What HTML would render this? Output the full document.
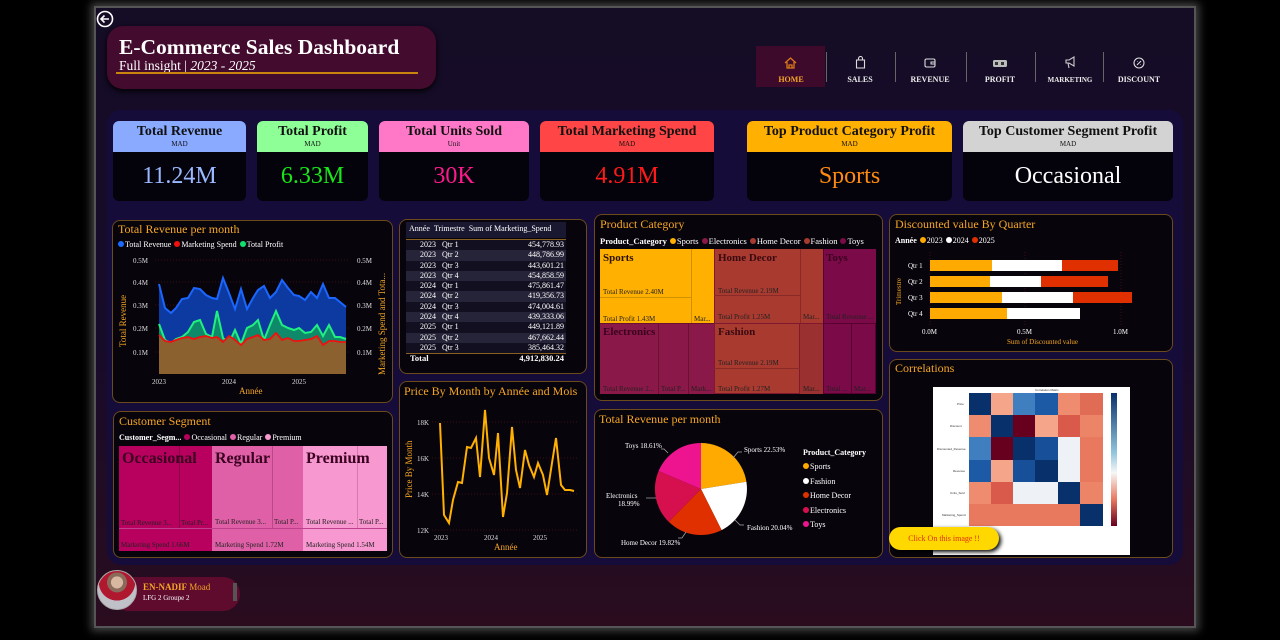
<!DOCTYPE html>
<html><head><meta charset="utf-8"><style>
*{margin:0;padding:0;box-sizing:border-box}
body{width:1280px;height:640px;background:#000;position:relative;overflow:hidden;font-family:"Liberation Serif",serif;color:#fff}
.a{position:absolute}
#frame{left:94px;top:6px;width:1102px;height:622px;background:linear-gradient(180deg,#150c26 0%,#170b2a 55%,#2a0c1e 100%);border:2px solid #555;box-shadow:0 0 8px 3px #444}
.box{position:absolute;background:#07040b;border:1px solid #6b4a1c;border-radius:8px}
.tt{position:absolute;color:#f5a623;font-size:12px;white-space:nowrap}
.card{position:absolute;top:121px;height:80px;border-radius:6px;background:#04030c;overflow:hidden;text-align:center}
.card .h{height:31px;color:#111;font-weight:bold;font-size:14px;line-height:17px;padding-top:2px}
.card .h small{display:block;font-size:7px;font-weight:normal;line-height:9px}
.card .v{font-size:24px;line-height:48px}
.nav{position:absolute;top:46px;width:70px;height:41px;text-align:center;font-size:8px;font-weight:bold;color:#eee}
.nav span{position:absolute;left:0;right:0;top:29px}
.sep{position:absolute;top:52px;width:1px;height:30px;background:#666}
.lg{font-size:8px;position:absolute;white-space:nowrap;color:#fff}
.dot{display:inline-block;width:6px;height:6px;border-radius:50%;margin:0 1px 0 3px}
.tm{position:absolute;font-size:7px;color:#222;white-space:nowrap;overflow:hidden}
</style></head><body>
<div id="frame" class="a"></div>
<svg class="a" style="left:96px;top:10px" width="18" height="18" viewBox="0 0 18 18"><circle cx="9" cy="9" r="7.5" fill="none" stroke="#fff" stroke-width="1.6"/><path d="M13 9H5M8.5 5.5L5 9l3.5 3.5" fill="none" stroke="#fff" stroke-width="1.6"/></svg>
<div class="a" style="left:107px;top:26px;width:329px;height:63px;background:#430b2d;border-radius:16px;box-shadow:0 2px 6px #000"></div>
<div class="a" style="left:119px;top:35px;font-size:21.5px;font-weight:bold;white-space:nowrap">E-Commerce Sales Dashboard</div>
<div class="a" style="left:119px;top:58px;font-size:13.5px;white-space:nowrap">Full insight | <i>2023 - 2025</i></div>
<div class="a" style="left:116px;top:72px;width:302px;height:2px;background:#c8860f"></div>
<div class="a" style="left:756px;top:46px;width:69px;height:41px;background:#3e0a2c"></div>
<div class="nav" style="left:756px;color:#f5a623"><svg class="a" style="left:28px;top:11px" width="13" height="12" viewBox="0 0 13 12"><path d="M1 6L6.5 1 12 6M3 5v6h7V5M5 11V8h3v3" fill="none" stroke="#d97a18" stroke-width="1.3"/></svg><span>HOME</span></div>
<div class="sep" style="left:826px"></div>
<div class="nav" style="left:825px"><svg class="a" style="left:30px;top:10px" width="11" height="13" viewBox="0 0 11 13"><path d="M1.5 4h8v8h-8zM3.5 4V2.5a2 2 0 0 1 4 0V4" fill="none" stroke="#ddd" stroke-width="1.1"/></svg><span>SALES</span></div>
<div class="sep" style="left:895px"></div>
<div class="nav" style="left:895px"><svg class="a" style="left:29px;top:12px" width="12" height="10" viewBox="0 0 12 10"><rect x="1" y="1" width="10" height="8" rx="1.5" fill="none" stroke="#ddd" stroke-width="1.1"/><path d="M7 4h4v2H7z" fill="none" stroke="#ddd"/></svg><span>REVENUE</span></div>
<div class="sep" style="left:966px"></div>
<div class="nav" style="left:965px"><svg class="a" style="left:27px;top:12px" width="16" height="10" viewBox="0 0 16 10"><rect x="1" y="2" width="14" height="7" rx="1.5" fill="#bbb"/><rect x="3" y="4" width="3" height="3" fill="#333"/><rect x="9" y="4" width="3" height="3" fill="#333"/></svg><span>PROFIT</span></div>
<div class="sep" style="left:1035px"></div>
<div class="nav" style="left:1035px;font-size:7px"><svg class="a" style="left:29px;top:10px" width="12" height="13" viewBox="0 0 12 13"><path d="M2 4h3l5-3v9L5 7H2zM4 7l1 5" fill="none" stroke="#ccc" stroke-width="1.1"/></svg><span style="top:30px">MARKETING</span></div>
<div class="sep" style="left:1103px"></div>
<div class="nav" style="left:1104px"><svg class="a" style="left:29px;top:11px" width="12" height="12" viewBox="0 0 12 12"><circle cx="6" cy="6" r="5" fill="none" stroke="#ddd" stroke-width="1.1"/><path d="M4 8l4-4M4 4.5h.5M7.5 7.5h.5" stroke="#ddd" stroke-width="1.1"/></svg><span>DISCOUNT</span></div>
<div class="a" style="left:107px;top:110px;width:1076px;height:455px;background:#150c3a;border-radius:14px"></div>
<div class="card" style="left:113px;width:133px"><div class="h" style="background:#8aaaff">Total Revenue<small>MAD</small></div><div class="v" style="color:#9ab8ff">11.24M</div></div>
<div class="card" style="left:257px;width:111px"><div class="h" style="background:#8dff96">Total Profit<small>MAD</small></div><div class="v" style="color:#19e619">6.33M</div></div>
<div class="card" style="left:379px;width:150px"><div class="h" style="background:#ff78c8">Total Units Sold<small>Unit</small></div><div class="v" style="color:#ff1a8c">30K</div></div>
<div class="card" style="left:540px;width:174px"><div class="h" style="background:#ff4545">Total Marketing Spend<small>MAD</small></div><div class="v" style="color:#ff1a1a">4.91M</div></div>
<div class="card" style="left:747px;width:205px"><div class="h" style="background:#ffb000">Top Product Category Profit<small>MAD</small></div><div class="v" style="color:#ff8a10">Sports</div></div>
<div class="card" style="left:963px;width:210px"><div class="h" style="background:#d3d3d3">Top Customer Segment Profit<small>MAD</small></div><div class="v" style="color:#fff">Occasional</div></div>

<div class="box" style="left:112px;top:220px;width:281px;height:183px"></div>
<div class="box" style="left:399px;top:219px;width:188px;height:155px"></div>
<div class="box" style="left:399px;top:381px;width:188px;height:177px"></div>
<div class="box" style="left:113px;top:411px;width:280px;height:147px"></div>
<div class="box" style="left:594px;top:214px;width:289px;height:187px"></div>
<div class="box" style="left:594px;top:409px;width:289px;height:149px"></div>
<div class="box" style="left:889px;top:214px;width:284px;height:138px"></div>
<div class="box" style="left:889px;top:359px;width:284px;height:199px"></div>

<div class="tt" style="left:118px;top:222px">Total Revenue per month</div>
<div class="lg" style="left:115px;top:240px"><span class="dot" style="background:#1a6aff"></span>Total Revenue<span class="dot" style="background:#f01010"></span>Marketing Spend<span class="dot" style="background:#10e070"></span>Total Profit</div>

<svg class="a" style="left:0;top:0" width="1280" height="640">
<g font-family="Liberation Serif,serif" font-size="7" fill="#ddd">
<text x="133" y="263">0.5M</text><text x="133" y="285">0.4M</text><text x="133" y="308">0.3M</text><text x="133" y="331">0.2M</text><text x="133" y="355">0.1M</text>
<text x="357" y="263">0.5M</text><text x="357" y="285">0.4M</text><text x="357" y="308">0.3M</text><text x="357" y="331">0.2M</text><text x="357" y="355">0.1M</text>
<text x="152" y="384">2023</text><text x="222" y="384">2024</text><text x="292" y="384">2025</text>
</g>
<g stroke="#3a1010" stroke-dasharray="1 2"><line x1="155" y1="260" x2="350" y2="260"/><line x1="155" y1="282" x2="350" y2="282"/><line x1="155" y1="305" x2="350" y2="305"/><line x1="155" y1="328" x2="350" y2="328"/><line x1="155" y1="352" x2="350" y2="352"/></g>
<polygon fill="#0d3aa0" points="159,374 159,284 165,308 171,313 176,308 182,299 188,298 194,288 200,289 206,295 212,298 217,299 223,278 229,293 235,309 241,289 247,309 253,298 258,290 264,286 270,298 276,292 282,280 288,288 294,295 299,296 305,300 311,292 317,298 323,284 329,298 335,298 340,302 346,307 346,374"/>
<polyline fill="none" stroke="#1a66ff" stroke-width="2" points="159,284 165,308 171,313 176,308 182,299 188,298 194,288 200,289 206,295 212,298 217,299 223,278 229,293 235,309 241,289 247,309 253,298 258,290 264,286 270,298 276,292 282,280 288,288 294,295 299,296 305,300 311,292 317,298 323,284 329,298 335,298 340,302 346,307"/>
<polygon fill="#0e8a6a" points="159,374 159,324 165,340 171,343 176,339 182,337 188,332 194,322 200,320 206,334 212,337 217,311 223,338 229,343 235,330 241,344 247,328 253,325 258,320 264,340 270,325 276,311 282,325 288,328 294,330 299,328 305,333 311,332 317,325 323,336 329,325 335,337 340,337 346,339 346,374"/>
<polyline fill="none" stroke="#20f080" stroke-width="2" points="159,324 165,340 171,343 176,339 182,337 188,332 194,322 200,320 206,334 212,337 217,311 223,338 229,343 235,330 241,344 247,328 253,325 258,320 264,340 270,325 276,311 282,325 288,328 294,330 299,328 305,333 311,332 317,325 323,336 329,325 335,337 340,337 346,339"/>
<polygon fill="#8c6130" points="159,374 159,335 165,341 171,342 176,340 182,338 188,337 194,339 200,337 206,336 212,338 217,337 223,342 229,336 235,340 241,345 247,339 253,337 258,335 264,340 270,339 276,333 282,340 288,338 294,341 299,341 305,340 311,339 317,336 323,345 329,341 335,341 340,342 346,342 346,374"/>
<polyline fill="none" stroke="#f01010" stroke-width="1.8" points="159,335 165,341 171,342 176,340 182,338 188,337 194,339 200,337 206,336 212,338 217,337 223,342 229,336 235,340 241,345 247,339 253,337 258,335 264,340 270,339 276,333 282,340 288,338 294,341 299,341 305,340 311,339 317,336 323,345 329,341 335,341 340,342 346,342"/>
<g font-family="Liberation Serif,serif" fill="#f5a623" font-size="9">
<text x="239" y="394">Année</text>
<text transform="translate(126,347) rotate(-90)">Total Revenue</text>
<text transform="translate(385,375) rotate(-90)">Marketing Spend and Tota...</text>
</g>

<g stroke="#3a1010" stroke-dasharray="1 2"><line x1="432" y1="422" x2="578" y2="422"/><line x1="432" y1="458" x2="578" y2="458"/><line x1="432" y1="494" x2="578" y2="494"/><line x1="432" y1="530" x2="578" y2="530"/></g>
<polyline fill="none" stroke="#ffb000" stroke-width="2" points="440,423 444,515 449,523 453,500 458,482 462,483 467,447 471,448 476,438 480,477 485,410 489,458 494,475 498,433 503,517 507,493 512,427 516,470 520,488 525,450 529,465 534,477 538,463 543,475 547,495 552,463 556,438 561,485 565,490 570,490 574,491"/>
<g font-family="Liberation Serif,serif" font-size="7" fill="#ddd"><text x="417" y="425">18K</text><text x="417" y="461">16K</text><text x="417" y="497">14K</text><text x="417" y="533">12K</text>
<text x="434" y="540">2023</text><text x="484" y="540">2024</text><text x="533" y="540">2025</text></g>
<g font-family="Liberation Serif,serif" fill="#f5a623" font-size="9"><text x="494" y="550">Année</text><text transform="translate(412,498) rotate(-90)">Price By Month</text></g>

<path d="M701 489L701 443A46 46 0 0 1 746.4 481.8Z" fill="#ffaa00"/>
<path d="M701 489L746.4 481.8A46 46 0 0 1 721.6 530.1Z" fill="#fff"/>
<path d="M701 489L721.6 530.1A46 46 0 0 1 668.7 521.8Z" fill="#e03000"/>
<path d="M701 489L668.7 521.8A46 46 0 0 1 658.6 471.0Z" fill="#d6104e"/>
<path d="M701 489L658.6 471.0A46 46 0 0 1 701 443Z" fill="#ee1490"/>
<g stroke="#aaa" fill="none" stroke-width=".7"><path d="M733 458l5-6h4"/><path d="M735 520l5 5h4"/><path d="M686 532l-4 6h-4"/><path d="M656 498h-10"/><path d="M668 453l-4-4h-3"/></g>
<g font-family="Liberation Serif,serif" font-size="7" fill="#fff"><text x="744" y="452">Sports 22.53%</text><text x="747" y="530">Fashion 20.04%</text><text x="621" y="545">Home Decor 19.82%</text><text x="606" y="498">Electronics</text><text x="618" y="506">18.99%</text><text x="625" y="448">Toys 18.61%</text></g>

<g stroke="#3a1010" stroke-dasharray="1 2"><line x1="930" y1="252" x2="930" y2="325"/><line x1="1025" y1="252" x2="1025" y2="325"/><line x1="1121" y1="252" x2="1121" y2="325"/></g>
<rect x="930" y="260" width="62" height="11" fill="#ffaa00"/><rect x="992" y="260" width="70" height="11" fill="#fff"/><rect x="1062" y="260" width="56" height="11" fill="#e03000"/>
<rect x="930" y="276" width="60" height="11" fill="#ffaa00"/><rect x="990" y="276" width="51" height="11" fill="#fff"/><rect x="1041" y="276" width="67" height="11" fill="#e03000"/>
<rect x="930" y="292" width="72" height="11" fill="#ffaa00"/><rect x="1002" y="292" width="71" height="11" fill="#fff"/><rect x="1073" y="292" width="59" height="11" fill="#e03000"/>
<rect x="930" y="308" width="77" height="11" fill="#ffaa00"/><rect x="1007" y="308" width="73" height="11" fill="#fff"/>
<g font-family="Liberation Serif,serif" font-size="7" fill="#fff"><text x="908" y="268">Qtr 1</text><text x="908" y="284">Qtr 2</text><text x="908" y="300">Qtr 3</text><text x="908" y="316">Qtr 4</text>
<text x="922" y="334">0.0M</text><text x="1017" y="334">0.5M</text><text x="1113" y="334">1.0M</text></g>
<g font-family="Liberation Serif,serif" font-size="7" fill="#f5a623"><text x="1007" y="344">Sum of Discounted value</text><text transform="translate(901,305) rotate(-90)">Trimestre</text></g>

<rect x="933" y="387" width="197" height="168" fill="#fff"/>
<g>
<rect x="969" y="393" width="23" height="23" fill="#08306b"/><rect x="991" y="393" width="23" height="23" fill="#f4a58a"/><rect x="1013" y="393" width="23" height="23" fill="#3f7fc0"/><rect x="1035" y="393" width="23" height="23" fill="#1c5aa6"/><rect x="1058" y="393" width="23" height="23" fill="#ef8b6e"/><rect x="1080" y="393" width="23" height="23" fill="#e06c55"/>
<rect x="969" y="415" width="23" height="23" fill="#ef8b6e"/><rect x="991" y="415" width="23" height="23" fill="#08306b"/><rect x="1013" y="415" width="23" height="23" fill="#67001f"/><rect x="1035" y="415" width="23" height="23" fill="#f4a58a"/><rect x="1058" y="415" width="23" height="23" fill="#d95a4a"/><rect x="1080" y="415" width="23" height="23" fill="#ec8468"/>
<rect x="969" y="437" width="23" height="23" fill="#3f7fc0"/><rect x="991" y="437" width="23" height="23" fill="#67001f"/><rect x="1013" y="437" width="23" height="23" fill="#08306b"/><rect x="1035" y="437" width="23" height="23" fill="#175099"/><rect x="1058" y="437" width="23" height="23" fill="#eef2f6"/><rect x="1080" y="437" width="23" height="23" fill="#e8785e"/>
<rect x="969" y="460" width="23" height="23" fill="#1c5aa6"/><rect x="991" y="460" width="23" height="23" fill="#f4a58a"/><rect x="1013" y="460" width="23" height="23" fill="#175099"/><rect x="1035" y="460" width="23" height="23" fill="#08306b"/><rect x="1058" y="460" width="23" height="23" fill="#eef2f6"/><rect x="1080" y="460" width="23" height="23" fill="#e8785e"/>
<rect x="969" y="482" width="23" height="23" fill="#ef8b6e"/><rect x="991" y="482" width="23" height="23" fill="#d95a4a"/><rect x="1013" y="482" width="23" height="23" fill="#eef2f6"/><rect x="1035" y="482" width="23" height="23" fill="#eef2f6"/><rect x="1058" y="482" width="23" height="23" fill="#08306b"/><rect x="1080" y="482" width="23" height="23" fill="#ec8468"/>
<rect x="969" y="504" width="23" height="22" fill="#e8785e"/><rect x="991" y="504" width="23" height="22" fill="#e8785e"/><rect x="1013" y="504" width="23" height="22" fill="#e8785e"/><rect x="1035" y="504" width="23" height="22" fill="#e8785e"/><rect x="1058" y="504" width="23" height="22" fill="#e8785e"/><rect x="1080" y="504" width="23" height="22" fill="#08306b"/>
</g>
<defs><linearGradient id="cb" x1="0" y1="0" x2="0" y2="1"><stop offset="0" stop-color="#08306b"/><stop offset=".45" stop-color="#92c5de"/><stop offset=".6" stop-color="#f7f7f7"/><stop offset=".8" stop-color="#e8785e"/><stop offset="1" stop-color="#67001f"/></linearGradient></defs>
<rect x="1111" y="393" width="6" height="133" fill="url(#cb)"/>
<g font-family="Liberation Sans,sans-serif" font-size="3" fill="#333"><text x="1035" y="391">Correlation Matrix</text><text x="957" y="405">Price</text><text x="950" y="427">Discount</text><text x="937" y="450">Discounted_Revenue</text><text x="953" y="472">Revenue</text><text x="950" y="494">Units_Sold</text><text x="942" y="516">Marketing_Spend</text></g>
</svg>

<div class="a" style="left:406px;top:222px;width:160px;height:16px;background:#1a1830"></div>
<div class="a" style="left:409px;top:224px;font-size:8px;white-space:nowrap">Année &nbsp;Trimestre &nbsp;Sum of Marketing_Spend</div>
<div class="a" style="left:406px;top:239px;width:160px;height:1px;background:#8a6020"></div>
<div class="a" style="left:406px;top:240px;width:160px;font-size:8px;line-height:10.3px">
<div style="background:#121020;display:flex"><span style="width:30px;text-align:right">2023</span><span style="width:40px;padding-left:6px">Qtr 1</span><span style="flex:1;text-align:right;padding-right:2px">454,778.93</span></div>
<div style="background:#262438;display:flex"><span style="width:30px;text-align:right">2023</span><span style="width:40px;padding-left:6px">Qtr 2</span><span style="flex:1;text-align:right;padding-right:2px">448,786.99</span></div>
<div style="background:#121020;display:flex"><span style="width:30px;text-align:right">2023</span><span style="width:40px;padding-left:6px">Qtr 3</span><span style="flex:1;text-align:right;padding-right:2px">443,601.21</span></div>
<div style="background:#262438;display:flex"><span style="width:30px;text-align:right">2023</span><span style="width:40px;padding-left:6px">Qtr 4</span><span style="flex:1;text-align:right;padding-right:2px">454,858.59</span></div>
<div style="background:#121020;display:flex"><span style="width:30px;text-align:right">2024</span><span style="width:40px;padding-left:6px">Qtr 1</span><span style="flex:1;text-align:right;padding-right:2px">475,861.47</span></div>
<div style="background:#262438;display:flex"><span style="width:30px;text-align:right">2024</span><span style="width:40px;padding-left:6px">Qtr 2</span><span style="flex:1;text-align:right;padding-right:2px">419,356.73</span></div>
<div style="background:#121020;display:flex"><span style="width:30px;text-align:right">2024</span><span style="width:40px;padding-left:6px">Qtr 3</span><span style="flex:1;text-align:right;padding-right:2px">474,004.61</span></div>
<div style="background:#262438;display:flex"><span style="width:30px;text-align:right">2024</span><span style="width:40px;padding-left:6px">Qtr 4</span><span style="flex:1;text-align:right;padding-right:2px">439,333.06</span></div>
<div style="background:#121020;display:flex"><span style="width:30px;text-align:right">2025</span><span style="width:40px;padding-left:6px">Qtr 1</span><span style="flex:1;text-align:right;padding-right:2px">449,121.89</span></div>
<div style="background:#262438;display:flex"><span style="width:30px;text-align:right">2025</span><span style="width:40px;padding-left:6px">Qtr 2</span><span style="flex:1;text-align:right;padding-right:2px">467,662.44</span></div>
<div style="background:#121020;display:flex"><span style="width:30px;text-align:right">2025</span><span style="width:40px;padding-left:6px">Qtr 3</span><span style="flex:1;text-align:right;padding-right:2px">385,464.32</span></div>
</div>
<div class="a" style="left:406px;top:353px;width:160px;height:1px;background:#8a6020"></div>
<div class="a" style="left:410px;top:353px;width:154px;font-size:8.5px;font-weight:bold;display:flex;justify-content:space-between"><span>Total</span><span>4,912,830.24</span></div>

<div class="tt" style="left:404px;top:384px">Price By Month by Année and Mois</div>

<div class="tt" style="left:119px;top:414px">Customer Segment</div>
<div class="lg" style="left:119px;top:433px"><b>Customer_Segm...</b><span class="dot" style="background:#b8005e"></span>Occasional<span class="dot" style="background:#e060a8"></span>Regular<span class="dot" style="background:#f898d0"></span>Premium</div>
<div class="a" style="left:119px;top:446px;width:93px;height:105px;background:#b8005e"></div>
<div class="a" style="left:212px;top:446px;width:91px;height:105px;background:#e060a8"></div>
<div class="a" style="left:303px;top:446px;width:84px;height:105px;background:#f898d0"></div>
<div class="a" style="left:179px;top:446px;width:1px;height:82px;background:#8a0046"></div>
<div class="a" style="left:272px;top:446px;width:1px;height:82px;background:#b84888"></div>
<div class="a" style="left:357px;top:446px;width:1px;height:82px;background:#d878b0"></div>
<div class="a" style="left:119px;top:528px;width:268px;height:1px;background:#c04090"></div>
<div class="a" style="left:122px;top:450px;font-size:16px;font-weight:bold;color:#3a0020">Occasional</div>
<div class="a" style="left:215px;top:450px;font-size:16px;font-weight:bold;color:#3a0020">Regular</div>
<div class="a" style="left:306px;top:450px;font-size:16px;font-weight:bold;color:#3a0020">Premium</div>
<div class="tm" style="left:121px;top:519px;width:56px">Total Revenue 3...</div><div class="tm" style="left:181px;top:519px;width:30px">Total Pr...</div>
<div class="tm" style="left:215px;top:518px;width:56px">Total Revenue 3...</div><div class="tm" style="left:274px;top:518px;width:28px">Total P...</div>
<div class="tm" style="left:306px;top:518px;width:50px">Total Revenue ...</div><div class="tm" style="left:359px;top:518px;width:28px">Total P...</div>
<div class="tm" style="left:121px;top:541px">Marketing Spend 1.66M</div>
<div class="tm" style="left:215px;top:541px">Marketing Spend 1.72M</div>
<div class="tm" style="left:306px;top:541px">Marketing Spend 1.54M</div>

<div class="tt" style="left:600px;top:217px">Product Category</div>
<div class="lg" style="left:600px;top:236px;font-size:8.5px"><b>Product_Category</b><span class="dot" style="background:#ffb000"></span>Sports<span class="dot" style="background:#8a1848"></span>Electronics<span class="dot" style="background:#a83a30"></span>Home Decor<span class="dot" style="background:#a83a30"></span>Fashion<span class="dot" style="background:#7a0a48"></span>Toys</div>
<div class="a" style="left:600px;top:249px;width:114px;height:74px;background:#ffb000"></div>
<div class="a" style="left:691px;top:249px;width:1px;height:74px;background:#d09000"></div>
<div class="a" style="left:600px;top:297px;width:91px;height:1px;background:#d09000"></div>
<div class="a" style="left:714px;top:249px;width:109px;height:74px;background:#a83a30;border-left:1px solid #801830"></div>
<div class="a" style="left:800px;top:249px;width:1px;height:74px;background:#8a2a28"></div>
<div class="a" style="left:714px;top:295px;width:86px;height:1px;background:#8a2a28"></div>
<div class="a" style="left:823px;top:249px;width:53px;height:74px;background:#7a0a48;border-left:1px solid #5a0030"></div>
<div class="a" style="left:600px;top:323px;width:114px;height:71px;background:#8a1848;border-top:1px solid #6a1030"></div>
<div class="a" style="left:658px;top:323px;width:1px;height:71px;background:#6a1030"></div>
<div class="a" style="left:688px;top:323px;width:1px;height:71px;background:#6a1030"></div>
<div class="a" style="left:714px;top:323px;width:86px;height:71px;background:#a83a30;border:1px solid #801830"></div>
<div class="a" style="left:714px;top:368px;width:86px;height:1px;background:#8a2a28"></div>
<div class="a" style="left:800px;top:323px;width:23px;height:71px;background:#9a3030;border-top:1px solid #801830"></div>
<div class="a" style="left:823px;top:323px;width:53px;height:71px;background:#7a0a48;border:1px solid #5a0030"></div>
<div class="a" style="left:851px;top:323px;width:1px;height:71px;background:#5a0030"></div>
<div class="a" style="left:603px;top:252px;font-size:11px;font-weight:bold;color:#2a1000">Sports</div>
<div class="a" style="left:718px;top:252px;font-size:11px;font-weight:bold;color:#3a0a10">Home Decor</div>
<div class="a" style="left:826px;top:252px;font-size:11px;font-weight:bold;color:#3a0020">Toys</div>
<div class="a" style="left:603px;top:326px;font-size:11px;font-weight:bold;color:#3a0020">Electronics</div>
<div class="a" style="left:718px;top:326px;font-size:11px;font-weight:bold;color:#3a0a10">Fashion</div>
<div class="tm" style="left:603px;top:288px">Total Revenue 2.40M</div><div class="tm" style="left:603px;top:315px">Total Profit 1.43M</div><div class="tm" style="left:694px;top:315px;width:19px">Mar...</div>
<div class="tm" style="left:718px;top:287px">Total Revenue 2.19M</div><div class="tm" style="left:718px;top:313px">Total Profit 1.25M</div><div class="tm" style="left:803px;top:313px;width:19px">Mar...</div><div class="tm" style="left:826px;top:313px;width:49px">Total Revenue ...</div>
<div class="tm" style="left:718px;top:359px">Total Revenue 2.19M</div><div class="tm" style="left:718px;top:385px">Total Profit 1.27M</div><div class="tm" style="left:803px;top:385px;width:19px">Mar...</div>
<div class="tm" style="left:603px;top:385px;width:54px">Total Revenue 2...</div><div class="tm" style="left:661px;top:385px;width:26px">Total P...</div><div class="tm" style="left:691px;top:385px;width:22px">Mark...</div>
<div class="tm" style="left:826px;top:385px;width:24px">Total ...</div><div class="tm" style="left:854px;top:385px;width:21px">Mar...</div>

<div class="tt" style="left:599px;top:412px">Total Revenue per month</div>
<div class="a" style="left:803px;top:448px;font-size:8px;font-weight:bold">Product_Category</div>
<div class="lg" style="left:800px;top:460px;line-height:14.5px"><div><span class="dot" style="background:#ffaa00"></span>Sports</div><div><span class="dot" style="background:#fff"></span>Fashion</div><div><span class="dot" style="background:#e03000"></span>Home Decor</div><div><span class="dot" style="background:#d6104e"></span>Electronics</div><div><span class="dot" style="background:#ee1490"></span>Toys</div></div>

<div class="tt" style="left:895px;top:217px">Discounted value By Quarter</div>
<div class="lg" style="left:895px;top:236px"><b>Année</b><span class="dot" style="background:#ffaa00"></span>2023<span class="dot" style="background:#fff"></span>2024<span class="dot" style="background:#e03000"></span>2025</div>

<div class="tt" style="left:895px;top:361px">Correlations</div>
<div class="a" style="left:889px;top:527px;width:110px;height:23px;background:#ffd800;border-radius:12px;box-shadow:2px 2px 4px #000;color:#e03010;font-size:8px;line-height:23px;text-align:center">Click On this image !!</div>

<div class="a" style="left:112px;top:577px;width:128px;height:34px;background:#5e0b2e;border-radius:17px"></div>
<div class="a" style="left:233px;top:583px;width:4px;height:18px;background:#555"></div>
<div class="a" style="left:97px;top:570px;width:40px;height:40px;border-radius:50%;background:radial-gradient(circle at 50% 30%,#d8b8a0 0 18%,#8a6a5a 19% 30%,#b01830 31% 55%,#c0c0c8 56%);border:1px solid #aaa"></div>
<div class="a" style="left:143px;top:582px;font-size:9px;color:#f5a623;white-space:nowrap"><b>EN-NADIF</b> Moad</div>
<div class="a" style="left:143px;top:594px;font-size:7px;white-space:nowrap">LFG 2 Groupe 2</div>
</body></html>
